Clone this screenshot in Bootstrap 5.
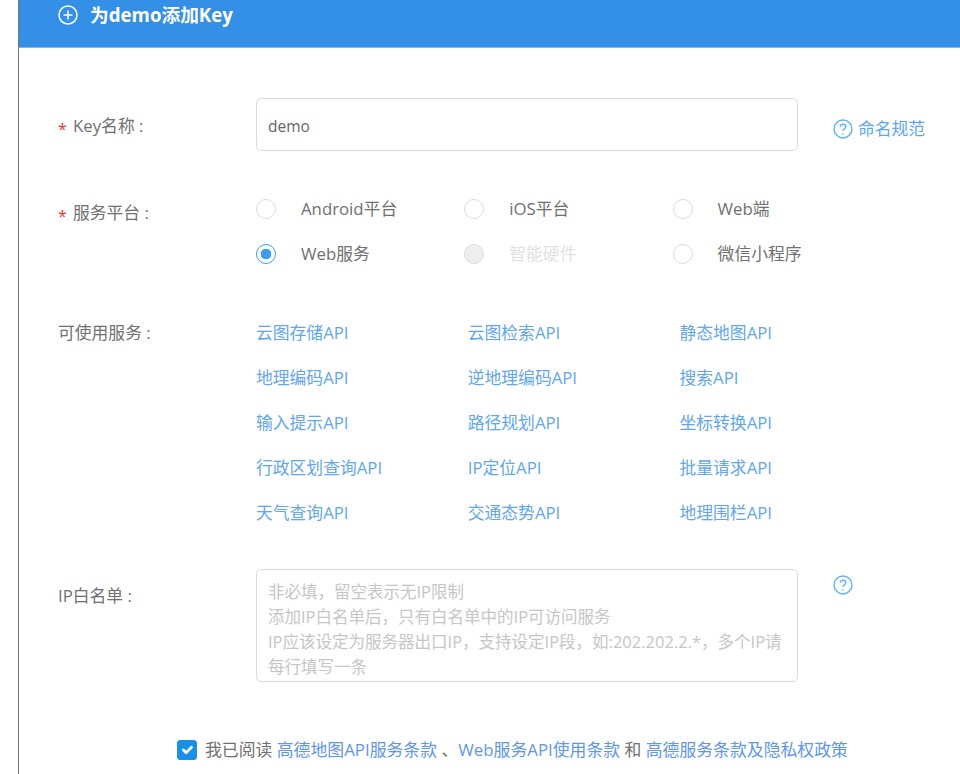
<!DOCTYPE html>
<html lang="zh-CN">
<head>
<meta charset="utf-8">
<title>为demo添加Key</title>
<link href="https://cdn.jsdelivr.net/npm/bootstrap@5.3.0/dist/css/bootstrap.min.css" rel="stylesheet">
<style>
html,body{height:774px;overflow:hidden;background:#fff}
body{font-family:"Open Sans","Noto Sans CJK SC",sans-serif;font-size:16.8px;color:#707070;line-height:1.5}
.shell{margin-left:18px;height:774px;border-left:1px solid #777;overflow:hidden;background:#fff}
.head-bar{height:48px;background:#348fe6;color:#fff;padding:0 0 17px 39px;border-bottom:1px solid #7db5ee;font-size:18.7px;font-weight:700;gap:12px}
.head-ico{width:20px;height:20px}
.form-body{padding:50px 0 0 39px}
.lbl-col{width:198px;flex:none;white-space:nowrap;line-height:23px}
.req{color:#f5332d;font-size:16px;margin-right:8px;display:inline-block;width:7px;vertical-align:-3px;line-height:1}
.key-row{height:53px}
.key-label{margin-top:1px}
.key-input.form-control{width:542px;height:53px;border:1px solid #dcdcdc;border-radius:5px;padding:2px 11px 0;font-size:15.5px;color:#666;box-shadow:none;background:#fff;font-family:inherit}
.name-rule{margin-left:35px;color:#59a8ef;text-decoration:none;gap:5px;white-space:nowrap;margin-top:9px}
.q-ico{width:20px;height:20px;flex:none}
.plat-row{margin-top:46px}
.plat-lbl{margin-top:4px}
.plat-grid{display:grid;grid-template-columns:repeat(3,208.3px);grid-auto-rows:45px;width:640px}
.plat-cell{gap:25px;height:23px;margin:0;padding:0}
.plat-cell .form-check-input{width:20px;height:20px;margin:0;float:none;border:1.5px solid #dcdcdc;flex:none;opacity:1;background-color:#fff}
.plat-cell .form-check-input:checked{border-color:#3d9cf0;background-color:#fff;background-image:radial-gradient(circle,#3d9cf0 0,#3d9cf0 5px,transparent 5.6px)}
.plat-cell .form-check-input:disabled{background-color:#eee}
.plat-cell .form-check-label{color:#707070;opacity:1}
.plat-cell.off .form-check-label{color:#c4c4c4}
.svc-row{margin-top:34px}
.svc-grid{display:grid;grid-template-columns:repeat(3,211.75px);grid-auto-rows:45px;width:640px}
.svc-grid a{color:#62a6f0;text-decoration:none;line-height:23px;white-space:nowrap}
.ip-row{margin-top:23px}
.ip-lbl{padding-top:15px}
.ip-area.form-control{width:542px;height:113px;border:1px solid #dcdcdc;border-radius:5px;padding:9px 11px 0;font-size:16.5px;line-height:25px;resize:none;overflow:hidden;box-shadow:none;font-family:inherit}
.ip-area::placeholder{color:#c6c6c6;opacity:1}
.ip-help{margin:6px 0 0 35px}
.agree{margin:56px 0 0 119px;gap:8px;white-space:nowrap;height:24px;font-size:16.85px}
.agree .form-check-input{width:20px;height:20px;margin:0;float:none;flex:none;background-color:#1a8fe8;border-color:#1a8fe8;border-radius:3px}
.agree a{color:#5f96ea;text-decoration:none}
.agree-text{color:#707070}
</style>
</head>
<body>
<div class="shell">
  <div class="head-bar d-flex align-items-center">
    <svg class="head-ico" viewBox="0 0 20 20" fill="none" stroke="#fff" stroke-width="1.5"><circle cx="10" cy="10" r="9"/><path d="M10 5.5v9M5.5 10h9"/></svg>
    <span>为demo添加Key</span>
  </div>
  <form class="form-body">
    <div class="d-flex align-items-center key-row">
      <label class="lbl-col key-label"><span class="req">*</span>Key名称 :</label>
      <input class="form-control key-input" type="text" value="demo">
      <a class="name-rule d-flex align-items-center" href="#">
        <svg class="q-ico" viewBox="0 0 20 20" fill="none" stroke="#5ab4f5" stroke-width="1.4"><circle cx="10" cy="10" r="9"/><path d="M7.3 7.8c0-1.6 1.2-2.6 2.8-2.6s2.7 1 2.7 2.3c0 2.2-2.8 2.2-2.8 4.5"/><path d="M10 14.2v1.4"/></svg>
        <span>命名规范</span>
      </a>
    </div>
    <div class="d-flex plat-row">
      <label class="lbl-col plat-lbl"><span class="req">*</span>服务平台 :</label>
      <div class="plat-grid">
        <div class="form-check plat-cell d-flex align-items-center"><input class="form-check-input" type="radio" name="p" id="p1"><label class="form-check-label" for="p1">Android平台</label></div>
        <div class="form-check plat-cell d-flex align-items-center"><input class="form-check-input" type="radio" name="p" id="p2"><label class="form-check-label" for="p2">iOS平台</label></div>
        <div class="form-check plat-cell d-flex align-items-center"><input class="form-check-input" type="radio" name="p" id="p3"><label class="form-check-label" for="p3">Web端</label></div>
        <div class="form-check plat-cell d-flex align-items-center"><input class="form-check-input" type="radio" name="p" id="p4" checked><label class="form-check-label" for="p4">Web服务</label></div>
        <div class="form-check plat-cell off d-flex align-items-center"><input class="form-check-input" type="radio" name="p" id="p5" disabled><label class="form-check-label" for="p5">智能硬件</label></div>
        <div class="form-check plat-cell d-flex align-items-center"><input class="form-check-input" type="radio" name="p" id="p6"><label class="form-check-label" for="p6">微信小程序</label></div>
      </div>
    </div>
    <div class="d-flex svc-row">
      <label class="lbl-col">可使用服务 :</label>
      <div class="svc-grid">
        <a href="#">云图存储API</a><a href="#">云图检索API</a><a href="#">静态地图API</a>
        <a href="#">地理编码API</a><a href="#">逆地理编码API</a><a href="#">搜索API</a>
        <a href="#">输入提示API</a><a href="#">路径规划API</a><a href="#">坐标转换API</a>
        <a href="#">行政区划查询API</a><a href="#">IP定位API</a><a href="#">批量请求API</a>
        <a href="#">天气查询API</a><a href="#">交通态势API</a><a href="#">地理围栏API</a>
      </div>
    </div>
    <div class="d-flex ip-row">
      <label class="lbl-col ip-lbl">IP白名单 :</label>
      <textarea class="form-control ip-area" placeholder="非必填，留空表示无IP限制&#10;添加IP白名单后，只有白名单中的IP可访问服务&#10;IP应该设定为服务器出口IP，支持设定IP段，如:202.202.2.*，多个IP请&#10;每行填写一条"></textarea>
      <svg class="q-ico ip-help" viewBox="0 0 20 20" fill="none" stroke="#5ab4f5" stroke-width="1.4"><circle cx="10" cy="10" r="9"/><path d="M7.3 7.8c0-1.6 1.2-2.6 2.8-2.6s2.7 1 2.7 2.3c0 2.2-2.8 2.2-2.8 4.5"/><path d="M10 14.2v1.4"/></svg>
    </div>
    <div class="d-flex align-items-center agree">
      <input class="form-check-input" type="checkbox" checked>
      <span class="agree-text">我已阅读 <a href="#">高德地图API服务条款</a> 、<a href="#">Web服务API使用条款</a> 和 <a href="#">高德服务条款及隐私权政策</a></span>
    </div>
  </form>
</div>
<script src="https://cdn.jsdelivr.net/npm/bootstrap@5.3.0/dist/js/bootstrap.bundle.min.js"></script>
</body>
</html>
